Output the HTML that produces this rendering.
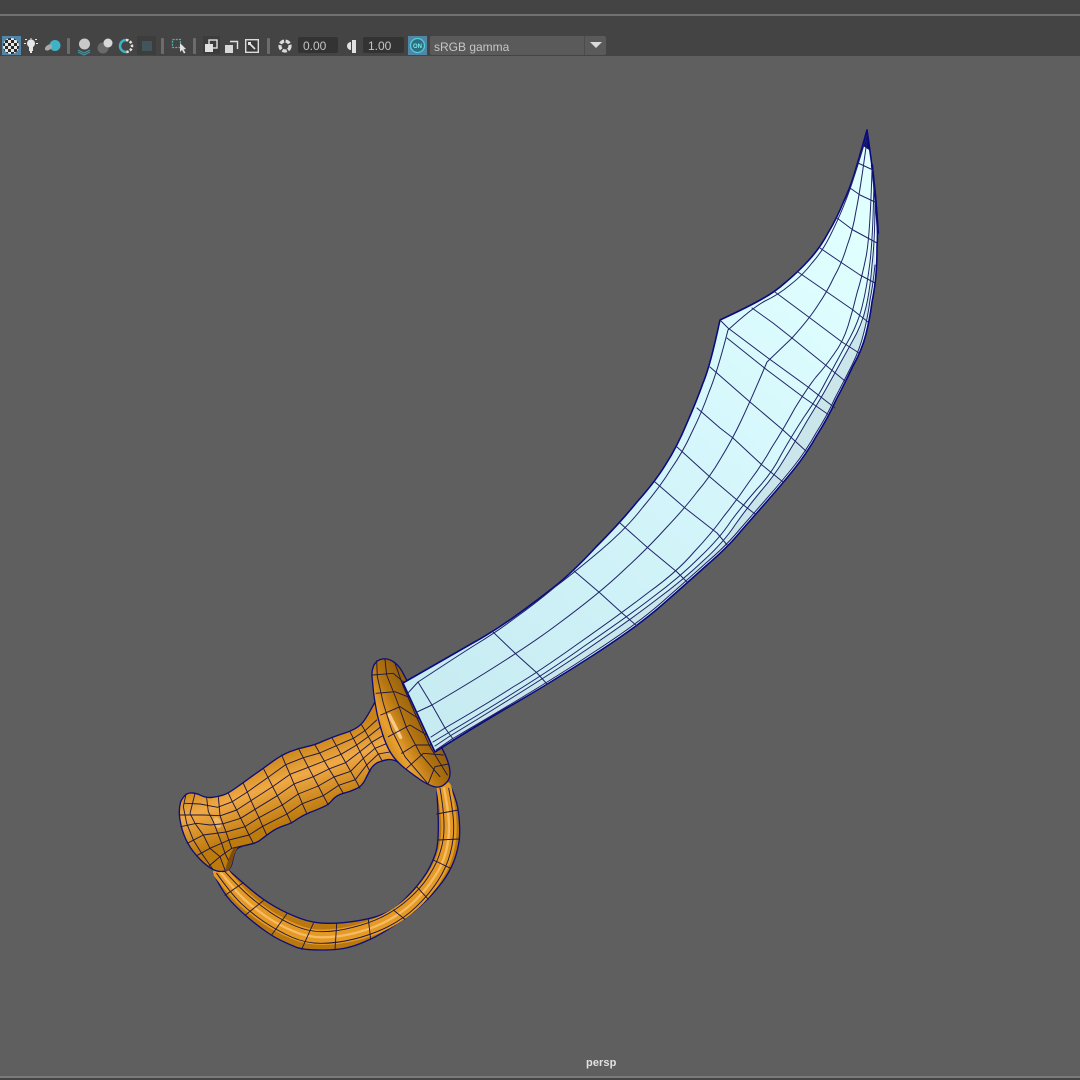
<!DOCTYPE html>
<html><head><meta charset="utf-8"><style>
html,body{margin:0;padding:0;background:#5f5f5f}
#p{position:relative;width:1080px;height:1080px;overflow:hidden;background:#5f5f5f;font-family:"Liberation Sans",sans-serif;filter:blur(.3px)}
.a{position:absolute}
.f{position:absolute;top:37px;height:16px;background:#333;border-radius:2px;color:#c4c4c4;font-size:12px;line-height:18px;text-align:left;box-sizing:border-box;padding-left:5px}
</style></head><body><div id="p">
<div class="a" style="left:0;top:0;width:1080px;height:56px;background:#444"></div>
<div class="a" style="left:0;top:14px;width:1080px;height:2px;background:#727272"></div>
<div class="a" style="left:0;top:1076px;width:1080px;height:2px;background:#7a7a7a"></div>
<div class="a" style="left:0;top:1078px;width:1080px;height:2px;background:#444"></div>
<div class="a" style="left:2px;top:36px;width:19px;height:19px;background:#5285a6"></div>
<div class="a" style="left:408px;top:36px;width:19px;height:19px;background:#5285a6"></div>
<div class="a" style="left:430px;top:36px;width:176px;height:19px;background:#5a5a5a;border-radius:2px"></div>
<div class="a" style="left:584px;top:36px;width:1px;height:19px;background:#4c4c4c"></div>
<div class="a" style="left:434px;top:39px;color:#c6c6c6;font-size:12px;line-height:16px">sRGB gamma</div>
<div class="f" style="left:298px;width:40px">0.00</div>
<div class="f" style="left:363px;width:41px">1.00</div>
<div class="a" style="left:586px;top:1057px;color:#e2e2e2;font-size:11px;font-weight:bold;line-height:13px;letter-spacing:.1px">persp</div>

<svg class="a" style="left:0;top:0" width="1080" height="1080" viewBox="0 0 1080 1080">
<defs>
<pattern id="ck" width="6" height="6" patternUnits="userSpaceOnUse" x="2" y="37"><rect width="6" height="6" fill="#e8e8e8"/><rect width="3" height="3" fill="#2a2a2a"/><rect x="3" y="3" width="3" height="3" fill="#2a2a2a"/></pattern>
<linearGradient id="bl" gradientUnits="userSpaceOnUse" x1="860" y1="230" x2="440" y2="730"><stop offset="0" stop-color="#e0ffff"/><stop offset=".45" stop-color="#d4f6fb"/><stop offset="1" stop-color="#c6ebf1"/></linearGradient>
<linearGradient id="hd" gradientUnits="userSpaceOnUse" x1="350" y1="340" x2="420" y2="530"><stop offset="0" stop-color="#c98415"/><stop offset=".42" stop-color="#f0a945"/><stop offset="1" stop-color="#bd7a0d"/></linearGradient>
<linearGradient id="gd" gradientUnits="userSpaceOnUse" x1="640" y1="290" x2="790" y2="210"><stop offset="0" stop-color="#c27f10"/><stop offset=".3" stop-color="#e9a030"/><stop offset=".6" stop-color="#b87710"/><stop offset="1" stop-color="#8f5c0c"/></linearGradient>
</defs>

<!-- toolbar icons -->
<circle cx="11" cy="46" r="8" fill="url(#ck)"/>
<g fill="#e6e6e6"><circle cx="31" cy="43.5" r="4"/><rect x="29" y="47" width="4" height="4"/><rect x="30" y="51" width="2" height="2"/><rect x="24" y="43" width="2" height="1"/><rect x="36" y="43" width="2" height="1"/><rect x="30.500" y="38" width="1" height="1.500"/><rect x="25" y="39" width="2" height="1"/><rect x="35" y="39" width="2" height="1"/></g>
<circle cx="55" cy="45.500" r="5.500" fill="#3fb3c6"/><ellipse cx="48.500" cy="47.500" rx="4" ry="2.500" fill="#a8a8a8" transform="rotate(-35 48.500 47.500)"/>
<g fill="#6c6c6c"><rect x="67" y="38" width="3" height="16" rx="1"/><rect x="161" y="38" width="3" height="16" rx="1"/><rect x="193" y="38" width="3" height="16" rx="1"/><rect x="267" y="38" width="3" height="16" rx="1"/></g>
<circle cx="84.500" cy="44" r="5.500" fill="#c9c9c9"/><path d="M78 50l6 3 6-3M78 52l6 3 6-3" fill="none" stroke="#3c9aa8" stroke-width="1.200"/>
<circle cx="103" cy="48" r="5.500" fill="#6a6a6a"/><circle cx="108" cy="43" r="4.500" fill="#d8d8d8"/>
<path d="M126 40a6 6 0 0 0 0 12" fill="none" stroke="#3fb3c6" stroke-width="2.500"/><path d="M126 40a6 6 0 0 1 0 12" fill="none" stroke="#e2e2e2" stroke-width="2.500" stroke-dasharray="2.500 1.500"/>
<rect x="137" y="36" width="19" height="19" fill="#3d3d3d"/><rect x="142" y="41" width="10" height="10" fill="#41555a"/>
<rect x="172.500" y="39.500" width="8" height="8" fill="none" stroke="#50b5b5" stroke-width="1.200" stroke-dasharray="2 1.200"/><path d="M180 43l0 9 2-2 2 3.500 1.500-1-2-3 2.500-.5z" fill="#e2e2e2"/>
<rect x="203" y="36" width="17" height="18" fill="#3c3c3c"/><rect x="209" y="40" width="8" height="8" fill="none" stroke="#e0e0e0" stroke-width="1.400"/><rect x="205" y="44" width="8" height="8" fill="#e0e0e0"/>
<rect x="225" y="45" width="8" height="8" fill="#d8d8d8"/><path d="M230 41.500h7.500v7.500" fill="none" stroke="#e0e0e0" stroke-width="1.400"/>
<rect x="245.700" y="39.700" width="12.600" height="12.600" fill="#3a3a3a" stroke="#dcdcdc" stroke-width="1.400"/><path d="M249 43l6 6" stroke="#e6e6e6" stroke-width="1.600"/><rect x="248" y="42" width="3" height="3" fill="#e6e6e6"/>
<circle cx="285" cy="46" r="5" fill="none" stroke="#dcdcdc" stroke-width="3.200" stroke-dasharray="4.500 1.500"/>
<path d="M352 40h4v13h-4z" fill="#e2e2e2"/><path d="M351 42a4 4 0 0 0 0 8z" fill="#e2e2e2"/>
<circle cx="417.500" cy="45.500" r="7" fill="#2d6f80" stroke="#4fd0d8" stroke-width="1.300"/><text x="417.500" y="47.800" font-family="Liberation Sans,sans-serif" font-size="6" font-weight="bold" text-anchor="middle" fill="#7fe6ea">ON</text>
<path d="M590 42h12l-6 6z" fill="#dcdcdc"/>

<!-- hilt, drawn in 3x local coordinates -->
<g transform="translate(160 640) scale(.33333)" stroke-linejoin="round" stroke-linecap="round" fill="none">
 <!-- ring -->
 <path d="M830,445L870,435Q888,475 893,502Q898,530 899,565Q900,600 892,630Q885,660 872,685Q860,710 840,735Q820,760 800,780Q780,800 760,816Q740,832 715,848Q690,865 665,880Q640,895 612,906Q585,918 557,924Q530,930 480,930Q430,930 407,921Q385,912 362,901Q340,890 320,876Q300,862 280,846Q260,830 244,815Q228,800 214,785Q200,770 189,752Q178,735 160,700L205,690Q250,730 280,755Q310,780 345,800Q380,820 420,835Q460,850 505,850Q550,850 595,842Q640,835 670,822Q700,810 719,792Q738,775 754,757Q770,740 785,720Q800,700 810,680Q820,660 826,642Q832,625 833,607Q835,590 835,555Q835,520 830,445Z" fill="#b8780f" stroke="#0d0d7a" stroke-width="4"/>
 <path d="M852,445Q866,515 867,555Q868,595 858,635Q848,675 822,713Q797,752 760,787Q722,822 677,845Q632,868 581,880Q530,892 486,892Q442,892 401,874Q360,857 322,832Q285,807 255,780Q225,752 182,697" stroke="#e59a24" stroke-width="46"/>
 <path d="M852,445Q866,515 867,555Q868,595 858,635Q848,675 822,713Q797,752 760,787Q722,822 677,845Q632,868 581,880Q530,892 486,892Q442,892 401,874Q360,857 322,832Q285,807 255,780Q225,752 182,697" stroke="#f7bb66" stroke-width="7"/>
 <g stroke="#1c1640" stroke-width="2.800">
  <path d="M840,445Q852,515 852,555Q853,595 842,631Q832,668 808,705Q785,742 748,775Q712,808 670,829Q628,850 579,862Q530,875 487,875Q445,875 406,858Q368,842 331,817Q295,792 266,767Q238,742 195,695"/>
  <path d="M866,445Q880,515 881,556Q882,597 871,639Q860,682 834,722Q808,762 770,799Q732,836 684,860Q636,884 583,897Q530,910 483,910Q437,910 394,891Q352,872 313,846Q275,820 244,791Q214,762 170,700"/>
  <path d="M830,522L895,510M835,600L899,597M820,660L872,685M770,740L805,778M700,810L735,838M625,838L632,898M530,852L525,930M460,850L425,928M380,822L335,885M310,782L255,826M250,728L195,766"/>
 </g>
 <!-- handle -->
 <path d="M62,485Q75,460 90,459Q105,458 122,466Q140,475 157,472Q175,470 190,465Q205,460 227,444Q250,428 280,406Q310,385 337,365Q365,345 390,335Q415,325 440,320Q465,315 490,303Q515,292 542,283Q570,275 587,265Q605,255 617,235Q630,215 648,180L720,370Q700,356 682,359Q665,362 652,368Q640,375 632,387Q625,400 615,420Q605,440 587,447Q570,455 550,460Q530,465 517,480Q505,495 487,502Q470,510 450,517Q430,525 412,537Q395,550 372,557Q350,565 335,575Q320,585 305,597Q290,610 262,615Q235,620 228,630Q222,640 217,666Q212,692 191,694Q170,697 150,683Q130,670 110,647Q90,625 77,597Q65,570 60,540Q55,510 62,485Z" fill="url(#hd)" stroke="#0d0d7a" stroke-width="4"/>
 <path d="M235,620Q222,640 217,666Q212,692 195,693Q205,650 222,622Z" fill="#7d4f0a"/>
 <ellipse cx="172" cy="548" rx="11" ry="17" fill="#f7c27c" opacity=".7" transform="rotate(-25 172 548)"/>
 <g stroke="#1c1640" stroke-width="2.800">
  <polyline points="205,460 217,485 230,510 242,535 255,560 267,585 280,610"/>
  <polyline points="250,430 262,456 273,482 285,508 297,533 308,559 320,585"/>
  <polyline points="310,385 324,412 338,440 352,467 367,495 381,522 395,550"/>
  <polyline points="365,345 377,374 390,403 402,432 415,462 427,491 440,520"/>
  <polyline points="415,325 430,353 445,382 460,410 475,438 490,467 505,495"/>
  <polyline points="465,315 479,339 493,363 507,387 522,411 536,436 550,460"/>
  <polyline points="515,292 529,317 543,343 557,368 572,394 586,419 600,445"/>
  <polyline points="570,275 580,295 590,315 600,335 610,355 620,375 630,395"/>
  <polyline points="605,255 615,272 625,290 635,307 645,325 655,342 665,360"/>
  <polyline points="75,490 120,492 173,502 217,485 262,456 324,412 377,374 430,353 479,339 529,317 580,295 615,272 650,240"/>
  <polyline points="58,525 130,525 182,527 230,510 273,482 338,440 390,403 445,382 493,363 543,343 590,315 625,290 660,262"/>
  <polyline points="62,560 110,550 150,555 190,551 242,535 285,508 352,467 402,432 460,410 507,387 557,368 600,335 635,307 672,285"/>
  <polyline points="82,610 130,585 198,576 255,560 297,533 367,495 415,462 475,438 522,411 572,394 610,355 645,325 682,310"/>
  <polyline points="110,647 150,625 207,600 267,585 308,559 381,522 427,491 490,467 536,436 586,419 620,375 655,342 695,335"/>
  <polyline points="145,680 180,650 215,625 280,610"/>
  <polyline points="105,460 90,520 105,550 130,585 150,625 180,650 195,690"/>
  <polyline points="140,475 145,515 160,545 185,610 195,640 205,660"/>
  <polyline points="175,470 180,527 198,576 215,625"/>
  <polyline points="78,462 70,500 80,550 100,600 125,640 160,690"/>
 </g>
 <!-- guard -->
 <path d="M642,75Q650,60 667,57Q685,55 700,65Q715,75 725,92Q735,110 792,220Q850,330 860,355Q870,380 870,400Q870,420 855,432Q840,445 822,440Q805,435 782,420Q760,405 737,387Q715,370 700,350Q685,330 672,295Q660,260 652,225Q645,190 641,160Q638,130 636,110Q635,90 642,75Z" fill="url(#gd)" stroke="#0d0d7a" stroke-width="4"/>
 <path d="M688,225L722,292" stroke="#f8c987" stroke-width="10"/>
 <g stroke="#1c1640" stroke-width="2.800">
  <polyline points="675,58 680,105 710,180 740,265 780,340 840,410"/>
  <polyline points="705,70 730,140 765,220 810,320 862,405"/>
  <polyline points="650,62 652,110 670,190 695,270 735,350 805,433"/>
  <path d="M638,105L700,100L735,130M648,160L705,155L755,175M662,225L720,200L775,235M685,290L750,255L800,285M725,340L765,315L820,315M740,385L790,340L850,345M805,430L825,380L865,372"/>
 </g>
</g>

<!-- blade -->
<g stroke-linejoin="round" stroke-linecap="round" fill="none">
 <path d="M403,683Q450,656 471,644Q493,632 514,617Q535,602 554,587Q573,572 596,547Q620,523 637,502Q655,482 666,464Q677,447 687,423Q697,400 703,383Q710,367 720,320Q750,306 762,299Q775,292 786,282Q798,272 809,260Q820,248 828,233Q837,218 843,203Q850,188 854,175Q858,162 867,130Q872,165 874,182Q876,200 877,216Q878,233 877,247Q877,262 876,274Q875,287 872,302Q870,318 866,334Q862,350 853,366Q845,383 836,400Q828,418 817,435Q807,453 795,468Q783,483 769,499Q755,515 741,531Q728,547 707,565Q687,583 662,605Q637,627 592,656Q547,685 500,712Q453,740 435,752Z" fill="url(#bl)" stroke="#0a0a80" stroke-width="1.600"/>
 <polygon points="450,736 542,680 630,620 683,580 724,542 747,508 775,475 795,442 820,400 842,360 862,325 870,290 875,240 875,265 873,285 868,316 860,349 844,381 827,416 806,451 782,481 754,513 727,545 686,581 636,625 546,684 452,739 436,750 435,746" fill="#cbe6ea"/>
 <polygon points="867,130 864,146 870,150" fill="#0a0a80" stroke="#0a0a80" stroke-width="1"/>
 <path d="M872,165Q876,200 878,233" stroke="#0a0a80" stroke-width="2.200"/>
 <g stroke="#1f2468" stroke-width="1">
  <path d="M408,693L418,682Q456,657 475,645Q495,633 515,618Q536,603 555,587Q575,572 601,550Q627,528 643,507Q660,487 671,469Q683,452 692,432Q702,412 709,392Q717,373 728,330Q752,308 765,301Q778,295 790,285Q803,275 812,263Q822,252 830,236Q838,220 844,205Q850,190 854,177Q858,165 867,135"/>
  <path d="M417,712L432,705Q517,655 558,624Q600,593 624,570Q648,548 666,528Q685,508 697,492Q710,477 721,458Q732,440 741,421Q750,402 767,362L792,338Q810,318 818,305Q827,292 834,277Q842,263 847,246Q853,230 856,211Q860,192 867,140"/>
  <path d="M431,737L445,728Q490,702 513,687Q537,673 579,643Q622,613 649,592Q677,572 694,552Q712,533 724,516Q737,500 749,482Q762,465 772,447Q783,430 795,408Q808,387 816,377Q825,367 834,354Q843,342 848,326Q853,310 857,293Q862,277 866,257Q870,237 872,170"/>
  <path d="M433,742L448,733Q540,678 583,647Q627,617 653,597Q680,577 700,557Q720,538 731,521Q743,505 757,489Q772,473 781,455Q791,437 804,417Q818,397 825,383Q832,370 844,348Q857,327 862,307Q867,287 870,262Q873,237 874,180"/>
  <path d="M435,746L450,736Q542,680 586,650Q630,620 656,600Q683,580 703,561Q724,542 735,525Q747,508 761,491Q775,475 785,458Q795,442 807,421Q820,400 831,380Q842,360 852,342Q862,325 866,307Q870,290 872,265Q875,240 875,200"/>
  <path d="M436,750L452,739Q546,684 591,654Q636,625 661,603Q686,581 706,563Q727,545 740,529Q754,513 768,497Q782,481 794,466Q806,451 816,433Q827,416 835,398Q844,381 852,365Q860,349 864,332Q868,316 870,300Q873,285 875,265"/>
  <polyline points="418,682 432,705 445,728 453,739"/>
  <polyline points="493,632 517,655 537,673 547,684"/>
  <polyline points="573,570 600,593 622,613 637,626"/>
  <polyline points="620,523 648,548 677,572 687,582"/>
  <polyline points="655,482 685,508 717,533 728,546"/>
  <polyline points="677,447 710,477 737,500 755,514"/>
  <polyline points="697,408 720,428 733,438 762,465 783,482"/>
  <polyline points="710,367 750,402 783,430 807,452"/>
  <polyline points="720,320 728,328 768,358 808,387 835,408"/>
  <polyline points="727,338 767,370 803,397 829,415"/>
  <polyline points="752,308 773,323 792,338 823,363 845,381"/>
  <polyline points="775,292 810,318 842,342 859,353"/>
  <polyline points="798,272 827,292 853,310 868,322"/>
  <polyline points="820,248 842,263 860,275 875,283"/>
  <polyline points="837,218 853,230 877,243"/>
  <polyline points="850,188 860,195 875,202"/>
  <polyline points="858,163 873,170"/>
 </g>
</g>
</svg>
</div></body></html>
